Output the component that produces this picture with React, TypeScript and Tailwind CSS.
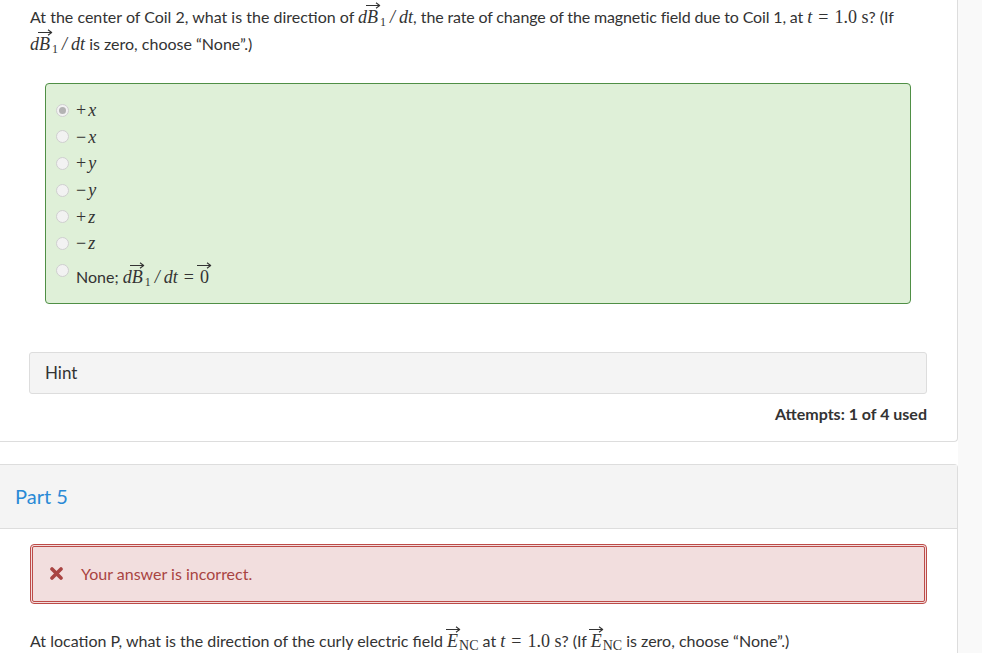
import type { ReactNode } from 'react'

const math = "font-['Liberation_Serif',serif] text-[18px] leading-none"

function Arrow() {
  return (
    <svg
      className="absolute left-1/2 -translate-x-1/2 -top-[6px]"
      width="15"
      height="7"
      viewBox="0 0 15 7"
      fill="none"
      stroke="currentColor"
      strokeWidth="1.1"
    >
      <path d="M0.5 3.5H14" />
      <path d="M10.5 0.8L14.2 3.5L10.5 6.2" />
    </svg>
  )
}

function Vec({ children }: { children: ReactNode }) {
  return (
    <span className="relative inline-block leading-none">
      {children}
      <Arrow />
    </span>
  )
}

function DB1() {
  return (
    <span className={`${math} whitespace-nowrap`}>
      <i>d</i>
      <Vec>
        <i>B</i>
      </Vec>
      <sub className="ml-[2px] text-[12px]">1</sub>
      <i className="mx-[4px]">/</i>
      <i>dt</i>
    </span>
  )
}

function ENC() {
  return (
    <span className={`${math} whitespace-nowrap`}>
      <Vec>
        <i>E</i>
      </Vec>
      <sub className="ml-[1px] text-[14px]">NC</sub>
    </span>
  )
}

function Time() {
  return (
    <span className={`${math} whitespace-nowrap`}>
      <i>t</i>
      <span className="mx-[6px]">=</span>1.0 s
    </span>
  )
}

function Radio({ checked }: { checked?: boolean }) {
  return (
    <span className="w-[13px] h-[13px] shrink-0 rounded-full border border-[#cfcfcf] bg-[#f2f2f2] flex items-center justify-center">
      {checked && <span className="w-[7px] h-[7px] rounded-full bg-[#b3b3b3]" />}
    </span>
  )
}

const options = [
  { sign: '+', v: 'x' },
  { sign: '−', v: 'x' },
  { sign: '+', v: 'y' },
  { sign: '−', v: 'y' },
  { sign: '+', v: 'z' },
  { sign: '−', v: 'z' },
]

export default function App() {
  return (
    <div className="flex min-h-[653px] bg-white font-['Lato',sans-serif] text-[#333] text-[16px]">
      <div className="w-[958px] shrink-0">
        {/* part 4 card, top cut off */}
        <div className="border-r border-b border-[#ddd] rounded-br-[4px] pl-[30px] pr-[30px] pt-[3px] pb-[18px]">
          <p className="leading-[27px]">
            At the center of Coil 2, what is the direction of <DB1 />,{' '}
            <span className="tracking-[-0.15px]">
              the rate of change of the magnetic field due to Coil 1, at
            </span>{' '}
            <Time />? (If
            <br />
            <DB1 /> is zero, choose “None”.)
          </p>

          <div className="mt-[26px] ml-[15px] mr-[16px] rounded-[4px] border border-[#4f8f45] bg-[#dff0d8] pl-[10px] pt-[13px] pb-[13px]">
            {options.map((o, i) => (
              <div key={i} className="flex items-center h-[26.6px]">
                <Radio checked={i === 0} />
                <span className={`${math} ml-[7px]`}>
                  {o.sign}
                  <i className="ml-[2px]">{o.v}</i>
                </span>
              </div>
            ))}
            <div className="flex items-start">
              <span className="mt-[7px]">
                <Radio />
              </span>
              <span className="ml-[7px] pt-[7px] leading-[26px]">
                None; <DB1 />
                <span className={math}>
                  <span className="mx-[6px]">=</span>
                  <Vec>0</Vec>
                </span>
              </span>
            </div>
          </div>

          <div className="mt-[48px] -ml-[1px] h-[42px] rounded-[3px] border border-[#ddd] bg-[#f4f4f4] flex items-center pl-[15px] text-[17px]">
            Hint
          </div>

          <div className="mt-[11px] text-right font-bold text-[16px] leading-[18px]">Attempts: 1 of 4 used</div>
        </div>

        {/* part 5 card */}
        <div className="mt-[22px] border-t border-r border-[#ddd] rounded-tr-[4px]">
          <div className="h-[64px] bg-[#f4f4f4] border-b border-[#ddd] flex items-center pl-[15px] text-[20px] text-[#2a8ad6]">
            Part 5
          </div>
          <div className="pl-[30px] pr-[30px] pt-[15px]">
            <div className="h-[60px] rounded-[4px] border-[3px] border-double border-[#bd4b48] bg-[#f2dede] flex items-center pl-[17px] text-[16px] text-[#a94442]">
              <svg width="13" height="13" viewBox="0 0 13 13" className="shrink-0">
                <path d="M2 2L11 11M11 2L2 11" stroke="#a94442" strokeWidth="3.6" strokeLinecap="round" />
              </svg>
              <span className="ml-[18px]">Your answer is incorrect.</span>
            </div>
            <p className="mt-[23px] leading-[27px]">
              At location P, what is the direction of the curly electric field <ENC /> at <Time />? (If <ENC /> is
              zero, choose “None”.)
            </p>
          </div>
        </div>
      </div>
      <div className="flex-1 bg-[#f9f9f9]" />
    </div>
  )
}
